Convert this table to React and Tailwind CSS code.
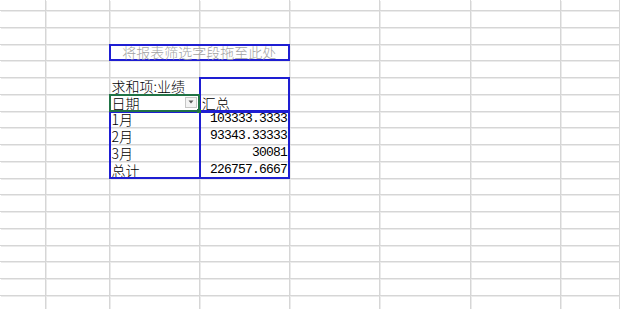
import React from "react";

const ROWS = 19;
const COLS = 8;

const cellData = {
  "5-2": { t: "求和项:业绩" },
  "6-2": { t: "日期", dd: true },
  "6-3": { t: "汇总" },
  "7-2": { t: "1月" },
  "7-3": { t: "103333.3333", n: true },
  "8-2": { t: "2月" },
  "8-3": { t: "93343.33333", n: true },
  "9-2": { t: "3月" },
  "9-3": { t: "30081", n: true },
  "10-2": { t: "总计" },
  "10-3": { t: "226757.6667", n: true },
};

function Cell({ d }) {
  if (!d) {
    return <div className="border-r border-b border-[#d6d6d6] shadow-[1px_1px_0_0_#ebebeb]" />;
  }
  if (d.n) {
    return (
      <div className="flex items-center justify-end border-r border-b border-[#d6d6d6] shadow-[1px_1px_0_0_#ebebeb] pr-[2px] whitespace-nowrap">
        <span className="font-['Liberation_Mono',monospace] text-[13px] leading-[14px] tracking-[-0.8px] text-black">
          {d.t}
        </span>
      </div>
    );
  }
  return (
    <div className="flex items-center justify-between border-r border-b border-[#d6d6d6] shadow-[1px_1px_0_0_#ebebeb] pl-[2px] whitespace-nowrap overflow-visible">
      <span className="font-['Noto_Sans_CJK_SC',sans-serif] font-light text-[14px] leading-[14px] text-black">
        {d.t}
      </span>
      {d.dd && (
        <span className="mr-[2px] self-start mt-[2px] w-[12px] h-[11px] border border-[#c6c6c6] bg-[#f3f3f3] flex items-center justify-center">
          <svg width="6" height="4" viewBox="0 0 6 4">
            <path d="M0.5 0.5 L5.5 0.5 L3 3.5 Z" fill="#5a5a5a" />
          </svg>
        </span>
      )}
    </div>
  );
}

export default function App() {
  const cells = [];
  for (let r = 0; r < ROWS; r++) {
    for (let c = 0; c < COLS; c++) {
      cells.push(<Cell key={`${r}-${c}`} d={cellData[`${r}-${c}`]} />);
    }
  }
  return (
    <div className="relative w-[620px] h-[309px] overflow-hidden bg-white">
      <div className="grid grid-cols-[46px_63.5px_90.3px_90.3px_90.3px_90.3px_90.3px_1fr] grid-rows-[11px_repeat(18,16.75px)] w-[620px] h-[309px]">
        {cells}
      </div>
      <div className="absolute inset-0 grid grid-cols-[46px_63.5px_90.3px_90.3px_90.3px_90.3px_90.3px_1fr] grid-rows-[11px_repeat(18,16.75px)] pointer-events-none">
        <div className="col-start-3 col-span-2 row-start-4 -mt-px -ml-px border-2 border-[#1e1ed2] flex items-center justify-center">
          <span className="font-['Noto_Sans_CJK_SC',sans-serif] font-light text-[14px] leading-[14px] text-[#a3a3a3] whitespace-nowrap">
            将报表筛选字段拖至此处
          </span>
        </div>
        <div className="col-start-4 row-start-6 row-span-2 -mt-px -ml-px border-2 border-[#1e1ed2]" />
        <div className="col-start-3 col-span-2 row-start-8 row-span-4 -mt-px -ml-px border-2 border-[#1e1ed2]" />
        <div className="col-start-4 row-start-8 row-span-4 -ml-px border-l-2 border-[#1e1ed2]" />
        <div className="col-start-3 row-start-7 -mt-px -ml-px border-2 border-[#217346] relative">
          <div className="absolute -right-[3px] -bottom-[3px] w-[4px] h-[4px] bg-[#217346]" />
        </div>
      </div>
    </div>
  );
}
